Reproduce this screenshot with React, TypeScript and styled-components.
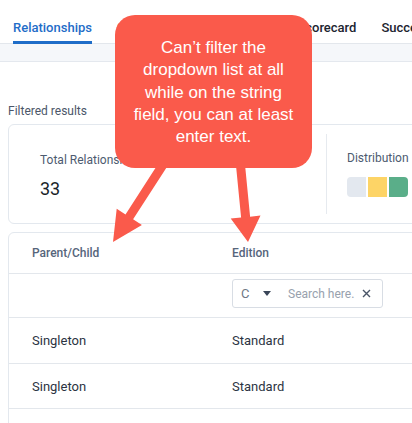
import React from "react";
import styled, { createGlobalStyle } from "styled-components";

const Global = createGlobalStyle`
  html, body { margin: 0; padding: 0; background: #ffffff; }
  body { font-family: Roboto, "Noto Sans", sans-serif; overflow: hidden; }
  * { box-sizing: border-box; }
`;

const Page = styled.div`
  position: relative;
  width: 412px;
  height: 423px;
  overflow: hidden;
  background: #fff;
`;

const TabBar = styled.div`
  display: flex;
  gap: 25px;
  padding-left: 13px;
  height: 44px;
  border-bottom: 1px solid #e3e7ec;
  white-space: nowrap;
`;

const Tab = styled.div<{ $active?: boolean }>`
  padding-top: 20px;
  line-height: 16px;
  font-size: 13px;
  font-weight: 500;
  color: ${(p) => (p.$active ? "#1f6dc8" : "#1c2430")};
  border-bottom: 3px solid ${(p) => (p.$active ? "#1f6dc8" : "transparent")};
  height: 44px;
`;

const Band = styled.div`
  height: 18px;
  background: #f5f7fa;
  border-bottom: 1px solid #e4e8ee;
`;

const Content = styled.div`
  padding-left: 8px;
  width: 440px;
`;

const SectionLabel = styled.div`
  margin-top: 41px;
  font-size: 12px;
  line-height: 16px;
  color: #4b5669;
`;

const StatCard = styled.div`
  margin-top: 5px;
  height: 100px;
  border: 1px solid #e3e8ee;
  border-radius: 6px;
  display: flex;
`;

const Stat = styled.div`
  width: 317px;
  padding: 28px 0 0 31px;
`;

const StatLabel = styled.div`
  font-size: 12px;
  line-height: 14px;
  color: #4d5b70;
`;

const StatValue = styled.div`
  margin-top: 11px;
  font-size: 18px;
  line-height: 22px;
  color: #1a1f29;
`;

const Divider = styled.div`
  width: 1px;
  margin: 9px 0;
  background: #e6eaef;
`;

const Dist = styled.div`
  padding: 26px 0 0 20px;
`;

const Bars = styled.div`
  margin-top: 12px;
  display: flex;
  gap: 2px;
`;

const Bar = styled.div<{ $color: string; $pos: "first" | "mid" | "last" }>`
  width: 19px;
  height: 20px;
  background: ${(p) => p.$color};
  border-radius: ${(p) =>
    p.$pos === "first" ? "4px 0 0 4px" : p.$pos === "last" ? "0 4px 4px 0" : "0"};
`;

const TableCard = styled.div`
  margin-top: 8px;
  border: 1px solid #e3e8ee;
  border-radius: 6px;
  height: 200px;
`;

const Row = styled.div<{ $h: number; $top?: number }>`
  display: flex;
  height: ${(p) => p.$h}px;
  align-items: ${(p) => (p.$top !== undefined ? "flex-start" : "center")};
  padding-top: ${(p) => p.$top ?? 0}px;
  border-bottom: 1px solid #e3e7ec;
`;

const Cell = styled.div<{ $w?: number; $head?: boolean }>`
  width: ${(p) => (p.$w ? `${p.$w}px` : "auto")};
  padding-left: ${(p) => (p.$w ? 23 : 0)}px;
  font-size: ${(p) => (p.$head ? 12 : 13)}px;
  font-weight: ${(p) => (p.$head ? 500 : 400)};
  color: ${(p) => (p.$head ? "#56657b" : "#2b3442")};
`;

const FilterBox = styled.div`
  width: 151px;
  height: 29px;
  border: 1px solid #d8dde4;
  border-radius: 3px;
  display: flex;
  align-items: center;
  padding-left: 8px;
`;

const Op = styled.span`
  font-size: 13px;
  color: #6f7886;
  width: 22px;
`;

const Caret = styled.span`
  width: 0;
  height: 0;
  border-left: 4.5px solid transparent;
  border-right: 4.5px solid transparent;
  border-top: 5px solid #3a4658;
  margin-right: 17px;
`;

const SearchText = styled.span`
  font-size: 12px;
  color: #98a1ad;
  flex: 1;
`;

const Clear = styled.span`
  width: 20px;
  display: flex;
  align-items: center;
`;

const Bubble = styled.div`
  position: absolute;
  left: 115px;
  top: 15px;
  width: 197px;
  height: 153px;
  border-radius: 20px;
  background: #fa5a4b;
  color: #fff;
  font-family: "Liberation Sans", Arial, sans-serif;
  font-size: 17px;
  line-height: 22.3px;
  text-align: center;
  padding-top: 22px;
`;

const Arrows = styled.svg`
  position: absolute;
  left: 0;
  top: 0;
`;

export default function App() {
  return (
    <Page>
      <Global />
      <TabBar>
        <Tab $active>Relationships</Tab>
        <Tab>Subscriptions</Tab>
        <Tab>Timeline</Tab>
        <Tab>Scorecard</Tab>
        <Tab>Success Plans</Tab>
      </TabBar>
      <Band />
      <Content>
        <SectionLabel>Filtered results</SectionLabel>
        <StatCard>
          <Stat>
            <StatLabel>Total Relationships</StatLabel>
            <StatValue>33</StatValue>
          </Stat>
          <Divider />
          <Dist>
            <StatLabel>Distribution</StatLabel>
            <Bars>
              <Bar $color="#e3e8ef" $pos="first" />
              <Bar $color="#fdd466" $pos="mid" />
              <Bar $color="#5aae89" $pos="last" />
            </Bars>
          </Dist>
        </StatCard>
        <TableCard>
          <Row $h={41}>
            <Cell $w={223} $head>Parent/Child</Cell>
            <Cell $head>Edition</Cell>
          </Row>
          <Row $h={44} $top={5}>
            <Cell $w={223} />
            <FilterBox>
              <Op>C</Op>
              <Caret />
              <SearchText>Search here.</SearchText>
              <Clear>
                <svg width="9" height="9" viewBox="0 0 9 9">
                  <path d="M1 1L8 8M8 1L1 8" stroke="#4a5567" strokeWidth="1.4" />
                </svg>
              </Clear>
            </FilterBox>
          </Row>
          <Row $h={46}>
            <Cell $w={223}>Singleton</Cell>
            <Cell>Standard</Cell>
          </Row>
          <Row $h={45}>
            <Cell $w={223}>Singleton</Cell>
            <Cell>Standard</Cell>
          </Row>
        </TableCard>
      </Content>
      <Arrows width="412" height="423" viewBox="0 0 412 423">
        <polygon
          fill="#fa5a4b"
          points="162.2,157.6 169.8,162.4 133.1,219.2 141.9,225 113,242 116.7,208.7 125.5,214.4"
        />
        <polygon
          fill="#fa5a4b"
          points="235.5,160.4 244.5,159.6 250.1,216.7 260.5,215.6 248,242 230.7,218.6 241.1,217.5"
        />
      </Arrows>
      <Bubble>
        Can’t filter the
        <br />
        dropdown list at all
        <br />
        while on the string
        <br />
        field, you can at least
        <br />
        enter text.
      </Bubble>
    </Page>
  );
}
